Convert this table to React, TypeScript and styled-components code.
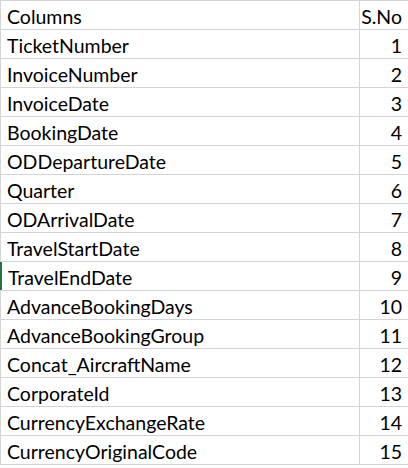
import React from 'react';
import styled, { createGlobalStyle } from 'styled-components';

const GlobalStyle = createGlobalStyle`
  html, body {
    margin: 0;
    padding: 0;
    background: #ffffff;
  }
  body {
    font-family: Lato, "Liberation Sans", sans-serif;
  }
`;

const Sheet = styled.div`
  width: 408px;
  height: 468px;
  overflow: hidden;
  background: #ffffff;
  border-top: 1px solid #d4d4d4;
  box-sizing: border-box;
`;

const Row = styled.div`
  display: grid;
  grid-template-columns: 359px 1fr;
  height: 29px;
  box-sizing: border-box;
  border-bottom: 1px solid #d4d4d4;
`;

const Cell = styled.div<{ $numeric?: boolean; $marked?: boolean }>`
  display: flex;
  align-items: center;
  justify-content: ${(p) => (p.$numeric ? 'flex-end' : 'flex-start')};
  padding: ${(p) => (p.$numeric ? '0 6px 0 0' : '0 0 0 6px')};
  border-left: ${(p) => (p.$numeric ? '1px solid #d4d4d4' : p.$marked ? '2px solid #217346' : '1px solid #d4d4d4')};
  box-sizing: border-box;
  font-size: 19.5px;
  color: #000000;
  white-space: nowrap;
  padding-top: 2px;
`;

const columns = [
  'TicketNumber',
  'InvoiceNumber',
  'InvoiceDate',
  'BookingDate',
  'ODDepartureDate',
  'Quarter',
  'ODArrivalDate',
  'TravelStartDate',
  'TravelEndDate',
  'AdvanceBookingDays',
  'AdvanceBookingGroup',
  'Concat_AircraftName',
  'CorporateId',
  'CurrencyExchangeRate',
  'CurrencyOriginalCode',
];

export default function App() {
  return (
    <>
      <GlobalStyle />
      <Sheet>
        <Row>
          <Cell>Columns</Cell>
          <Cell $numeric>S.No</Cell>
        </Row>
        {columns.map((name, i) => (
          <Row key={name}>
            <Cell $marked={name === 'TravelEndDate'}>{name}</Cell>
            <Cell $numeric>{i + 1}</Cell>
          </Row>
        ))}
      </Sheet>
    </>
  );
}
